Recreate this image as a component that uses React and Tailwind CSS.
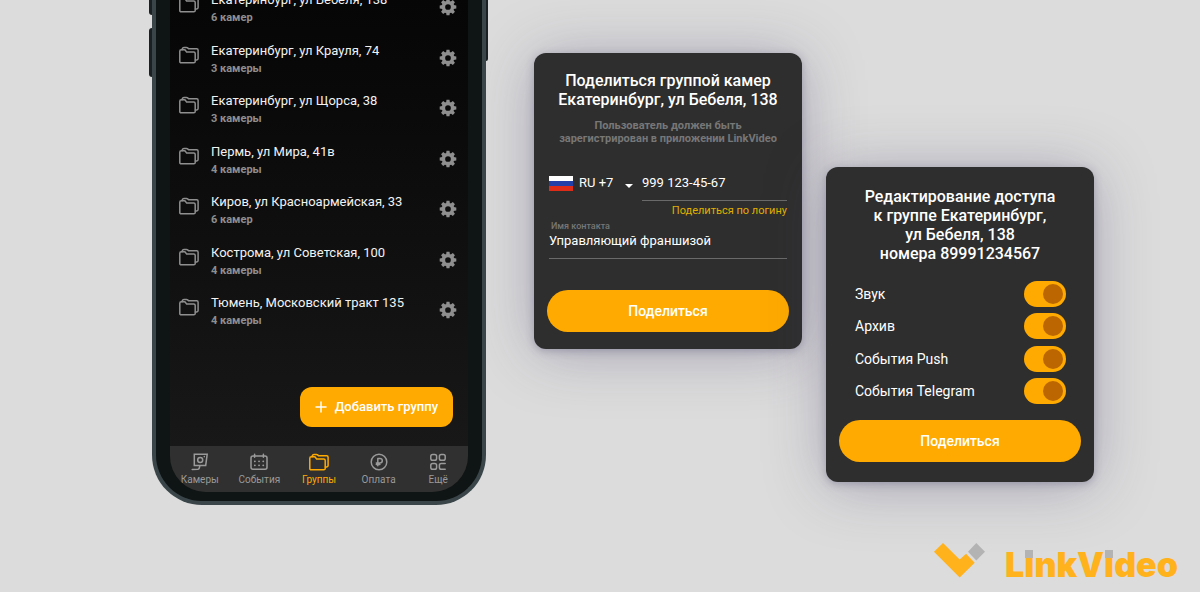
const groups = [
  { id: 1, title: "Екатеринбург, ул Бебеля, 138", count: "6 камер" },
  { id: 2, title: "Екатеринбург, ул Крауля, 74", count: "3 камеры" },
  { id: 3, title: "Екатеринбург, ул Щорса, 38", count: "3 камеры" },
  { id: 4, title: "Пермь, ул Мира, 41в", count: "4 камеры" },
  { id: 5, title: "Киров, ул Красноармейская, 33", count: "6 камер" },
  { id: 6, title: "Кострома, ул Советская, 100", count: "4 камеры" },
  { id: 7, title: "Тюмень, Московский тракт 135", count: "4 камеры" },
];

const tabs = [
  { id: "cameras", label: "Камеры", Icon: CameraIcon },
  { id: "events", label: "События", Icon: CalendarIcon },
  { id: "groups", label: "Группы", Icon: FoldersIcon, active: true },
  { id: "payment", label: "Оплата", Icon: RubleIcon },
  { id: "more", label: "Ещё", Icon: MoreIcon },
];

const permissions = [
  { id: "sound", label: "Звук" },
  { id: "archive", label: "Архив" },
  { id: "push", label: "События Push" },
  { id: "telegram", label: "События Telegram" },
];

function Svg({ children, className = "h-[18px] w-5", viewBox = "0 0 20 18" }) {
  return (
    <svg
      className={className}
      viewBox={viewBox}
      fill="none"
      stroke="currentColor"
      strokeWidth="1.5"
      strokeLinecap="round"
      strokeLinejoin="round"
      aria-hidden="true"
    >
      {children}
    </svg>
  );
}

function FoldersIcon() {
  return (
    <Svg>
      <path d="M.8 5.200c0-.9.500-1.400 1.400-1.400h3.100c.6 0 1 .2 1.300.7l.7 1.100c.2.400.5.500.9.500h6.600c.9 0 1.400.5 1.400 1.400v7.900c0 .9-.5 1.400-1.400 1.400H2.200c-.9 0-1.400-.5-1.400-1.400z" />
      <path d="M3 3.700l.3-1c.3-.9.800-1.200 1.600-1.200h2.600c.6 0 1 .2 1.400.6l.6.700h8.200c.9 0 1.400.5 1.400 1.400v8.400c0 .9-.5 1.400-1.400 1.400h-1.300" />
    </Svg>
  );
}

function CameraIcon() {
  return (
    <Svg>
      <path d="M4.300 1.200h12.900l-1.500 11.200H4.300z" strokeLinejoin="miter" />
      <circle cx="10.200" cy="7" r="2.500" />
      <path d="M14.300 3.600v.2M9.800 12.800l-.5 2.200c-.2.800-.6 1.100-1.400 1.200l-5.700.3" />
    </Svg>
  );
}

function CalendarIcon() {
  return (
    <Svg>
      <rect x="2" y="3" width="16" height="13.300" rx="2" />
      <path d="M5.600 1.300v3M14.400 1.300v3" />
      <path
        d="M5.800 8.300h.1M10 8.300h.1M14.200 8.300h.1M5.800 12.300h.1M10 12.300h.1M14.200 12.300h.1"
        strokeWidth="1.800"
      />
    </Svg>
  );
}

function RubleIcon() {
  return (
    <Svg>
      <circle cx="10" cy="9" r="7.800" />
      <path d="M8.800 12.800V5.500h2c1.600 0 2.500.8 2.500 2.200s-.9 2.200-2.500 2.200H7.300M7.300 11.400h3.600" />
    </Svg>
  );
}

function MoreIcon() {
  return (
    <Svg>
      <rect x="2.800" y="1.500" width="5.800" height="5.800" rx="1.800" />
      <rect x="11.400" y="1.500" width="5.800" height="5.800" rx="1.800" />
      <rect x="2.800" y="10.500" width="5.800" height="5.800" rx="1.800" />
      <path d="M17.200 10.500h-4c-1.100 0-1.800.7-1.800 1.800v2.200c0 1.100.7 1.800 1.800 1.800h4" />
    </Svg>
  );
}

function GearIcon() {
  return (
    <svg className="size-[18px]" viewBox="-9 -9 18 18" fill="currentColor" aria-hidden="true">
      <circle r="4.600" fill="none" stroke="currentColor" strokeWidth="3.500" />
      {[0, 45, 90, 135, 180, 225, 270, 315].map((angle) => (
        <path key={angle} d="M-1.900-5.500l.4-2.800h3l.4 2.800z" transform={`rotate(${angle})`} />
      ))}
    </svg>
  );
}

function Phone() {
  return (
    <section className="relative rounded-b-[50px] border-x-4 border-b-4 border-[#3a4549] bg-[#0f1414] px-[14px] pb-[9px]">
      <span className="absolute -left-[7px] top-0 h-[15px] w-[3px] rounded-bl bg-[#1b2123]" />
      <span className="absolute -left-[7px] top-7 h-[49px] w-[3px] rounded-l bg-[#1b2123]" />
      <span className="absolute -right-[6px] top-0 h-[61px] w-[2px] rounded-br bg-[#1b2123]" />
      <div className="flex flex-col overflow-hidden rounded-b-[36px] bg-linear-to-b from-[#060606] to-[#1a1a1a]">
        <ul className="-mt-[17px] grid h-[354px] auto-rows-fr">
          {groups.map((group) => (
            <li key={group.id} className="flex items-start pt-2 pr-[11px] pl-[9px] text-[#8f8f8f]">
              <div className="pt-1">
                <FoldersIcon />
              </div>
              <div className="ml-3 flex-1 whitespace-nowrap">
                <p className="text-[13px] leading-[18px] text-[#f2f2f2]">{group.title}</p>
                <p className="mt-px text-[11px] leading-4 font-bold">{group.count}</p>
              </div>
              <button type="button" className="pt-[7px]" aria-label={`Настройки: ${group.title}`}>
                <GearIcon />
              </button>
            </li>
          ))}
        </ul>
        <button
          type="button"
          className="mt-[50px] mr-[15px] flex h-10 items-center gap-2 self-end rounded-xl bg-[#ffaa00] px-[15px] text-[13px] font-medium text-white"
        >
          <Svg className="size-3" viewBox="0 0 12 12">
            <path d="M6 1v10M1 6h10" />
          </Svg>
          Добавить группу
        </button>
        <nav className="mt-[19px] grid h-[46px] grid-cols-5 bg-[#303030]">
          {tabs.map(({ id, label, Icon, active }) => (
            <a
              key={id}
              href={`#${id}`}
              className={
                active
                  ? "flex flex-col items-center gap-px pt-[7px] text-[10px] leading-4 text-[#ffaa00]"
                  : "flex flex-col items-center gap-px pt-[7px] text-[10px] leading-4 text-[#9a9a9a]"
              }
            >
              <Icon />
              {label}
            </a>
          ))}
        </nav>
      </div>
    </section>
  );
}

function Card({ className, children }) {
  return (
    <section
      className={`rounded-xl bg-[#2e2e2e] px-[13px] text-white shadow-[0_2px_8px_rgba(60,60,100,0.3),0_4px_60px_rgba(70,60,100,0.35)] ${className}`}
    >
      {children}
    </section>
  );
}

function ShareButton() {
  return (
    <button type="submit" className="h-[42px] w-full rounded-full bg-[#ffaa00] text-sm font-medium text-white">
      Поделиться
    </button>
  );
}

function RussianFlag() {
  return (
    <svg className="h-[15px] w-6" viewBox="0 0 24 15" aria-hidden="true">
      <path fill="#fff" d="M0 0h24v5H0z" />
      <path fill="#2340a8" d="M0 5h24v5H0z" />
      <path fill="#dd2c18" d="M0 10h24v5H0z" />
    </svg>
  );
}

function ShareCard() {
  return (
    <Card className="mt-[53px] pt-[18px] pb-[17px]">
      <form>
        <h2 className="text-center text-base leading-[19px] font-medium whitespace-nowrap">
          Поделиться группой камер
          <br />
          Екатеринбург, ул Бебеля, 138
        </h2>
        <p className="mt-[10px] text-center text-[11px] leading-[13px] font-bold whitespace-nowrap text-[#777777]">
          Пользователь должен быть
          <br />
          зарегистрирован в приложении LinkVideo
        </p>
        <div className="mt-5 px-[2px]">
          <div className="flex h-9 items-center text-[13px]">
            <RussianFlag />
            <div className="relative ml-[6px] w-[63px]">
              <select aria-label="Код страны" className="w-full appearance-none bg-transparent">
                <option>RU +7</option>
              </select>
              <svg
                className="pointer-events-none absolute top-[11px] right-[9px] h-1 w-2"
                viewBox="0 0 8 4"
                fill="#fff"
                aria-hidden="true"
              >
                <path d="M0 0h8L4 4z" />
              </svg>
            </div>
            <input
              type="tel"
              aria-label="Телефон"
              defaultValue="999 123-45-67"
              className="h-9 min-w-0 flex-1 border-b border-[#6a6a6a] bg-transparent outline-none"
            />
          </div>
          <a href="#login" className="mt-[2px] block text-right text-[11px] leading-4 text-[#e0b000]">
            Поделиться по логину
          </a>
          <label htmlFor="contact" className="mt-px block pl-[2px] text-[9px] leading-3 font-medium text-[#777777]">
            Имя контакта
          </label>
          <input
            id="contact"
            type="text"
            defaultValue="Управляющий франшизой"
            className="block h-[27px] w-full border-b border-[#6a6a6a] bg-transparent pb-[10px] text-[13px] outline-none"
          />
        </div>
        <div className="mt-[31px]">
          <ShareButton />
        </div>
      </form>
    </Card>
  );
}

function AccessCard() {
  return (
    <Card className="mt-[167px] pt-5 pb-5">
      <form>
        <h2 className="text-center text-base leading-[19px] font-medium whitespace-nowrap">
          Редактирование доступа
          <br />
          к группе Екатеринбург,
          <br />
          ул Бебеля, 138
          <br />
          номера 89991234567
        </h2>
        <div className="mt-[15px] grid h-[129px] auto-rows-fr pr-[15px] pl-4">
          {permissions.map((permission) => (
            <div key={permission.id} className="flex items-center justify-between text-sm">
              <label htmlFor={permission.id}>{permission.label}</label>
              <input
                id={permission.id}
                type="checkbox"
                role="switch"
                defaultChecked
                className="flex h-[26px] w-[42px] appearance-none items-center rounded-full bg-[#555555] px-[3px] before:size-5 before:rounded-full before:bg-[#bb6600] checked:justify-end checked:bg-[#ffaa00]"
              />
            </div>
          ))}
        </div>
        <div className="mt-[13px]">
          <ShareButton />
        </div>
      </form>
    </Card>
  );
}

function LogoDotI() {
  return (
    <span className="relative">
      i
      <span className="absolute top-[6px] left-[1px] h-[8px] w-[8px] bg-[#b3b3b3]" />
    </span>
  );
}

function Logo() {
  return (
    <a href="#home" className="flex items-start gap-5">
      <svg className="h-[35px] w-[51px]" viewBox="0 0 51 35" aria-hidden="true">
        <path fill="#ffb21c" d="M9 0l16.700 16.600 6.400-5.800 8.600 8.900-15 14.700L0 8.700z" />
        <path fill="#b3b3b3" d="M42.300 0l8.700 8.700-8.700 8.700L34 8.700z" />
      </svg>
      <span className="mt-1 font-['Inter'] text-[34px] leading-9 font-black text-[#ffb21c]">
        L<LogoDotI />
        nkV
        <LogoDotI />
        deo
      </span>
    </a>
  );
}

export default function App() {
  return (
    <div className="flex min-h-screen flex-col overflow-hidden bg-[#dcdcdc] font-['Roboto',sans-serif]">
      <main className="grid grid-cols-[minmax(0,358fr)_minmax(0,268fr)_minmax(0,268fr)] items-start gap-6 pr-[106px] pl-[152px]">
        <div className="pr-6">
          <Phone />
        </div>
        <ShareCard />
        <AccessCard />
      </main>
      <footer className="flex justify-end pt-[38px] pr-[22px]">
        <Logo />
      </footer>
    </div>
  );
}
